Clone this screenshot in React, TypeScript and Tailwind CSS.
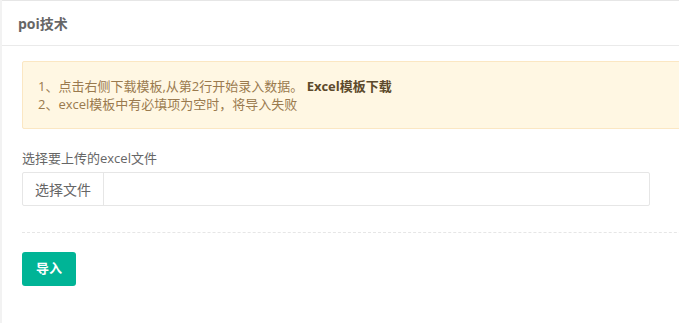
export default function App() {
  return (
    <div className="h-[323px] w-[679px] overflow-hidden bg-[#f2f2f2] pl-[2px] font-['Open_Sans','Noto_Sans_CJK_SC',sans-serif]">
      <div className="h-full w-[720px] border-t border-[#e6e6e6] bg-white">
        <div className="flex h-[45px] items-center border-b border-[#eaeaea] pl-4 text-[14px] font-bold text-[#666]">
          poi技术
        </div>
        <div className="pl-5 pt-[15px]">
          <div className="w-[700px] rounded-[2px] border border-[#fbe7c3] bg-[#fff7e3] px-[15px] py-[15px] text-[13px] leading-[18px] text-[#9a7a4e]">
            <p>
              1、点击右侧下载模板,从第2行开始录入数据。{' '}
              <a className="font-bold text-[#5d4a2c]">Excel模板下载</a>
            </p>
            <p>2、excel模板中有必填项为空时，将导入失败</p>
          </div>
          <div className="mt-[20px] text-[13px] leading-[18px] text-[#666]">选择要上传的excel文件</div>
          <div className="mt-[5px] flex h-[34px] w-[628px] rounded-[2px] border border-[#e6e6e6]">
            <div className="flex w-[81px] items-center justify-center border-r border-[#e6e6e6] text-[14px] text-[#666]">
              选择文件
            </div>
            <div className="flex-1" />
          </div>
          <div className="mt-[26px] border-t border-dashed border-[#e6e6e6]" />
          <button className="mt-[19px] flex h-[34px] w-[54px] items-center justify-center rounded-[3px] bg-[#00b496] text-[13px] font-bold text-white">
            导入
          </button>
        </div>
      </div>
    </div>
  );
}
